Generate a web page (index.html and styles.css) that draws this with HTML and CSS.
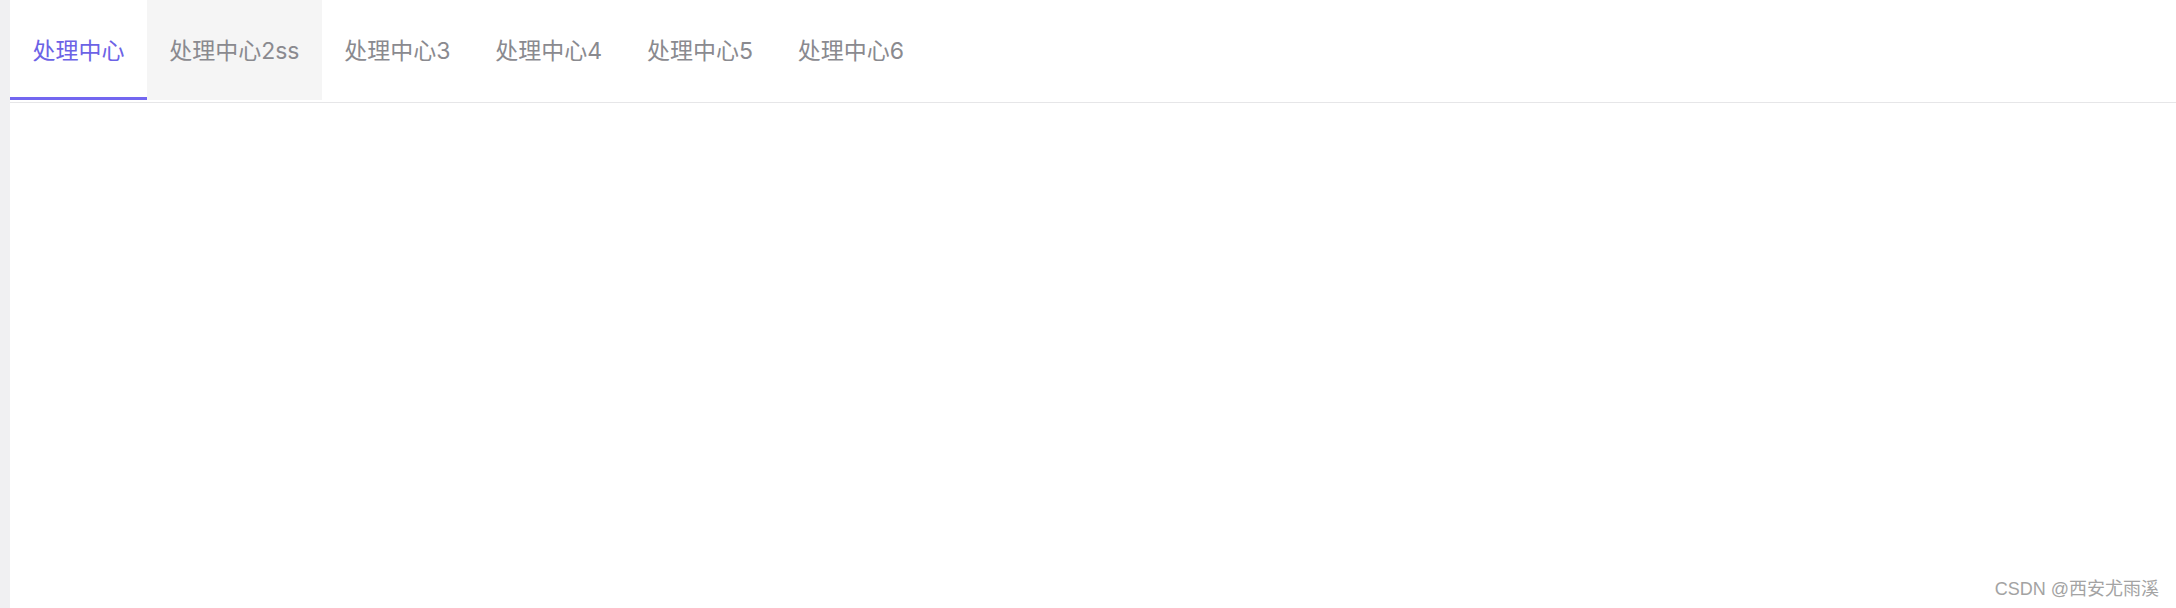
FILE: index.html
```html
<html>
	<head>
		<link rel="stylesheet" href="styles.css">
	</head>
	<body>
		<div class="side"></div>
		<div class="main">
			<div class="tabs">
				<div class="tab active">处理中心</div>
				<div class="tab hover">处理中心2ss</div>
				<div class="tab">处理中心3</div>
				<div class="tab">处理中心4</div>
				<div class="tab">处理中心5</div>
				<div class="tab">处理中心6</div>
			</div>
		</div>
		<div class="mark">CSDN @西安尤雨溪</div>
	</body>
</html>
```

FILE: styles.css
```css
body{
	margin: 0;
	height: 608px;
	display: flex;
	font-family: Inter, "Noto Sans CJK SC", sans-serif;
	background: #fff;
	overflow: hidden;
}
.side{
	width: 10px;
	background: #f0f0f2;
}
.main{
	flex: 1;
}
.tabs{
	display: flex;
	margin-bottom: 1px;
	border-bottom: 1px solid #e6e6e8;
	height: 102px;
}
.tab{
	height: 97px;
	padding: 0 22.4px;
	display: flex;
	align-items: center;
	font-size: 23px;
	color: #8a8a8f;
	border-bottom: 3px solid transparent;
	margin-bottom: 1px;
	cursor: pointer;
}
.active{
	color: #6c63e6;
	border-bottom-color: #7367f0;
}
.hover{
	background: #f5f5f5;
}
.mark{
	position: absolute;
	right: 17px;
	bottom: 8px;
	font-family: "Liberation Sans", "Noto Sans CJK SC", sans-serif;
	font-size: 18px;
	color: #a3a3a3;
	text-shadow: 0 0 2px #fff;
}
```
